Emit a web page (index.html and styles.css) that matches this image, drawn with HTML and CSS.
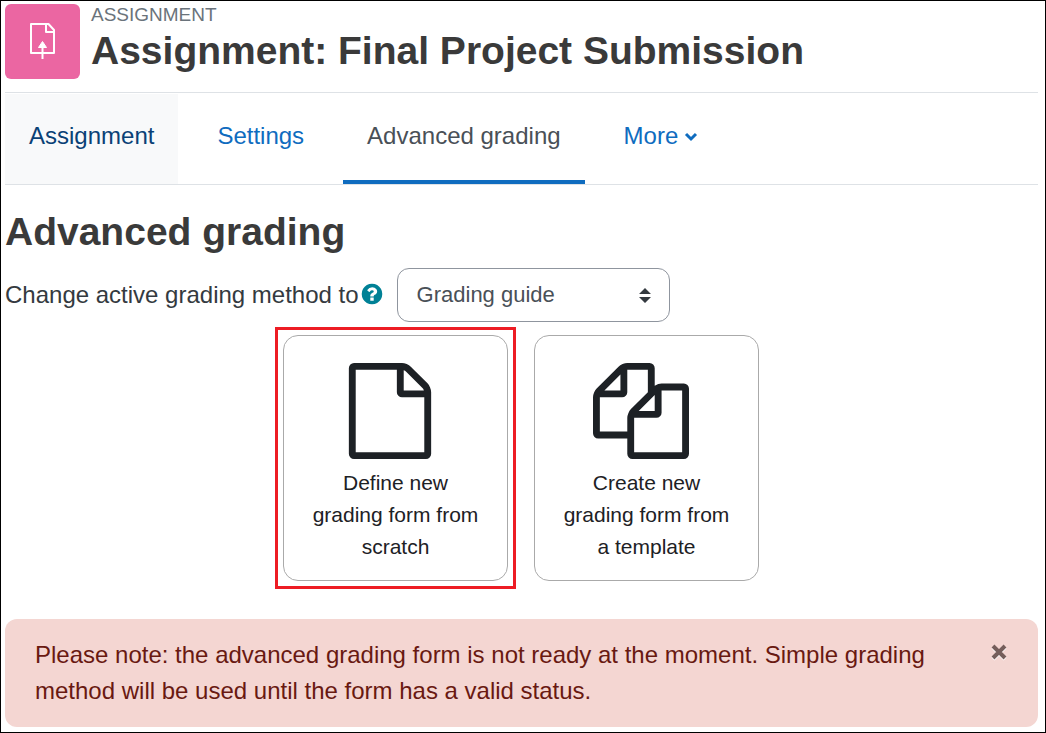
FILE: index.html
```html
<!DOCTYPE html>
<html lang="en">
<head>
	<meta charset="UTF-8">
	<meta name="viewport" content="width=device-width, initial-scale=1">
	<title>Assignment: Final Project Submission</title>
	<link rel="stylesheet" href="styles.css">
</head>
<body>
	<header class="page-header">
		<div class="activity-icon">
			<svg width="37" height="45" viewBox="0 0 37 45" fill="none" stroke="#fff" stroke-width="2" stroke-linejoin="round" aria-hidden="true">
				<path d="M7 5H24.500l5.500 6V34H7z"/>
				<path d="M22 5v8h8"/>
				<path d="M18.500 40V26"/>
				<path d="M14.500 28.500l4-6 4 6z" fill="#fff" stroke-width="1"/>
			</svg>
		</div>
		<div class="page-title">
			<div class="activity-type">Assignment</div>
			<h1>Assignment: Final Project Submission</h1>
		</div>
	</header>

	<nav class="tabs">
		<a class="tab hover" href="#">Assignment</a>
		<a class="tab" href="#">Settings</a>
		<a class="tab active" href="#" aria-current="page">Advanced grading</a>
		<a class="tab" href="#">More
			<svg class="chevron" width="14" height="10" viewBox="0 0 14 10" aria-hidden="true">
				<path d="M2 2l5 5 5-5" fill="none" stroke="currentColor" stroke-width="3"/>
			</svg>
		</a>
	</nav>

	<main>
		<h2>Advanced grading</h2>

		<form class="method-form">
			<label for="method">Change active grading method to</label>
			<button class="help" type="button" aria-label="Help">
				<svg width="24" height="24" viewBox="0 0 1792 1792" fill="currentColor" aria-hidden="true">
					<path d="M1024 1376v-192q0-14-9-23t-23-9h-192q-14 0-23 9t-9 23v192q0 14 9 23t23 9h192q14 0 23-9t9-23zm256-672q0-88-55.5-163t-138.5-116-170-41q-243 0-371 213-15 24 8 42l132 100q7 6 19 6 16 0 25-12 53-68 86-92 34-24 86-24 48 0 85.5 26t37.5 59q0 38-20 61t-68 45q-63 28-115.5 86.5t-52.5 125.5v36q0 14 9 23t23 9h192q14 0 23-9t9-23q0-19 21.5-49.5t54.5-49.5q32-18 49-28.5t46-35 44.5-48 28-60.5 12.5-81zm384 192q0 209-103 385.5t-279.5 279.5-385.5 103-385.5-103-279.5-279.5-103-385.5 103-385.5 279.5-279.5 385.5-103 385.5 103 279.5 279.5 103 385.5z"/>
				</svg>
			</button>
			<div class="select-wrap">
				<select id="method">
					<option>Grading guide</option>
				</select>
				<svg class="select-arrows" width="12" height="15" viewBox="0 0 12 15" fill="#343a40" aria-hidden="true">
					<path d="M0 6l6-6 6 6zM0 9l6 6 6-6z"/>
				</svg>
			</div>
		</form>

		<div class="actions">
			<a class="action highlighted" href="#">
				<svg class="action-icon" width="96" height="96" viewBox="0 0 1792 1792" fill="currentColor" aria-hidden="true">
					<path d="M1596 380q28 28 48 76t20 88v1152q0 40-28 68t-68 28h-1344q-40 0-68-28t-28-68v-1600q0-40 28-68t68-28h896q40 0 88 20t76 48zm-444-244v376h376q-10-29-22-41l-313-313q-12-12-41-22zm384 1528v-1024h-416q-40 0-68-28t-28-68v-416h-768v1536h1280z"/>
				</svg>
				<span>Define new grading form from scratch</span>
			</a>
			<a class="action" href="#">
				<svg class="action-icon" width="96" height="96" viewBox="0 0 1792 1792" fill="currentColor" aria-hidden="true">
					<path d="M1696 384q40 0 68 28t28 68v1216q0 40-28 68t-68 28h-960q-40 0-68-28t-28-68v-288h-544q-40 0-68-28t-28-68v-672q0-40 20-88t48-76l408-408q28-28 76-48t88-20h416q40 0 68 28t28 68v328q68-40 128-40h416zm-544 213l-299 299h299v-299zm-640-384l-299 299h299v-299zm196 647l316-316v-416h-384v416q0 40-28 68t-68 28h-416v640h512v-256q0-40 20-88t48-76zm956 804v-1152h-384v416q0 40-28 68t-68 28h-416v640h896z"/>
				</svg>
				<span>Create new grading form from a template</span>
			</a>
		</div>

		<div class="alert" role="alert">
			<p>Please note: the advanced grading form is not ready at the moment. Simple grading method will be used until the form has a valid status.</p>
			<button class="close" type="button" aria-label="Dismiss this notification">
				<svg width="16" height="17" viewBox="0 0 16 17" fill="none" stroke-width="4" aria-hidden="true">
					<path d="M2 3l12 12M14 3L2 15" stroke="#fff"/>
					<path d="M2 2l12 12M14 2L2 14" stroke="#755e5b"/>
				</svg>
			</button>
		</div>
	</main>
</body>
</html>
```
FILE: styles.css
```css
* {
	box-sizing: border-box;
}

body {
	margin: 0;
	min-height: 100vh;
	padding: 3px 7px 5px 4px;
	border: 1px solid #000;
	background: #fff;
	color: #343a40;
	font-family: "Liberation Sans", Arial, sans-serif;
	font-size: 24px;
	line-height: 36px;
}

h1,
h2 {
	margin: 0;
	color: #3a3a3a;
	font-size: 39px;
	line-height: 46px;
}

a {
	color: #0f6cbf;
	text-decoration: none;
}

button {
	padding: 0;
	border: 0;
	background: none;
	cursor: pointer;
}

svg {
	display: block;
}

/* Header */
.page-header {
	display: flex;
	gap: 11px;
	padding-bottom: 13px;
}

.activity-icon {
	display: flex;
	flex: none;
	align-items: center;
	justify-content: center;
	width: 75px;
	height: 75px;
	border-radius: 6px;
	background: #eb66a2;
}

.activity-type {
	color: #6a737b;
	font-size: 19px;
	line-height: 22px;
	text-transform: uppercase;
}

.page-title h1 {
	padding-top: 2px;
}

/* Tabs */
.tabs {
	display: flex;
	gap: 15px;
	padding-top: 1px;
	border-top: 1px solid #dee2e6;
	border-bottom: 1px solid #dee2e6;
}

.tab {
	display: flex;
	align-items: center;
	gap: 6px;
	height: 90px;
	padding: 0 24px 2px;
	border-bottom: 4px solid transparent;
}

.tab.hover {
	border-bottom-color: #f8f9fa;
	background: #f8f9fa;
	color: #0a4176;
}

.tab.active {
	border-bottom-color: #0f6cbf;
	color: #495057;
}

.chevron {
	margin-top: 2px;
}

/* Grading method */
h2 {
	padding-top: 24px;
}

.method-form {
	display: flex;
	align-items: center;
	margin-top: 13px;
}

.help {
	margin: 0 0 2px 1px;
	color: #008196;
}

.select-wrap {
	position: relative;
	margin-left: 13px;
}

select {
	display: block;
	width: 273px;
	height: 54px;
	padding: 0 48px 2px 19px;
	border: 1px solid #8f959e;
	border-radius: 12px;
	background: #fff;
	color: #495057;
	font-family: inherit;
	font-size: 22px;
	appearance: none;
}

.select-arrows {
	position: absolute;
	top: 20px;
	right: 19px;
	pointer-events: none;
}

/* Form actions */
.actions {
	display: flex;
	justify-content: center;
	gap: 26px;
	padding: 13px 1px 38px 0;
}

.action {
	position: relative;
	width: 225px;
	padding: 27px 24px 17px;
	border: 1px solid #aaa;
	border-radius: 15px;
	color: #1d2125;
	font-size: 21px;
	line-height: 32px;
	text-align: center;
}

/* square frame around the rounded card */
.action.highlighted::after {
	content: "";
	position: absolute;
	inset: -9px;
	border: 3px solid #ed1c24;
	pointer-events: none;
}

.action-icon {
	margin: 0 auto 8px;
	transform: translateX(-6px);
}

/* Alert */
.alert {
	display: flex;
	align-items: flex-start;
	justify-content: space-between;
	gap: 60px;
	padding: 18px 31px 18px 30px;
	border-radius: 12px;
	background: #f4d6d2;
	color: #691911;
}

.alert p {
	margin: 0;
}

.close {
	margin-top: 7px;
}
```
